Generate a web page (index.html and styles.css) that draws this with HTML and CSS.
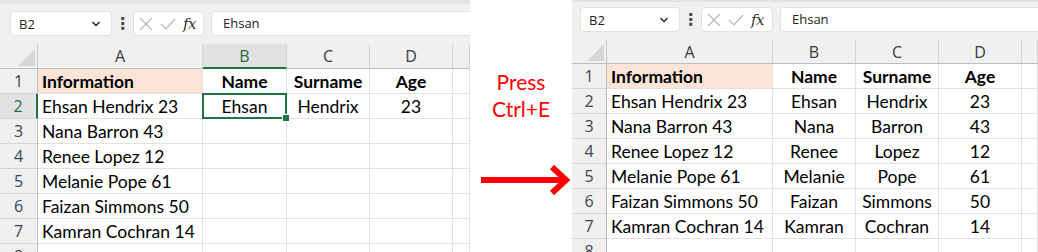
FILE: index.html
```html
<!DOCTYPE html>
<html>
<head>
<meta charset="utf-8">
<link rel="stylesheet" href="styles.css">
</head>
<body>
<div class="page">
  <div class="xl xl-left">
    <div class="toolbar">
      <div class="namebox"><span>B2</span><svg class="chev" width="10" height="8" viewBox="0 0 10 8"><path d="M1.5 2 L5 5.5 L8.5 2" fill="none" stroke="#333" stroke-width="1.6"/></svg></div>
      <div class="dots">⋮</div>
      <div class="fxbox">
        <svg width="14" height="14" viewBox="0 0 14 14"><path d="M1 1 L13 13 M13 1 L1 13" stroke="#b8b8b8" stroke-width="1.2" fill="none"/></svg>
        <svg width="16" height="14" viewBox="0 0 16 14"><path d="M1 7 L6 12 L15 2" stroke="#b8b8b8" stroke-width="1.2" fill="none"/></svg>
        <span class="fx">fx</span>
      </div>
      <div class="formula">Ehsan</div>
    </div>
    <div class="sheet sheet-left">
      <div class="corner"><span class="tri"></span></div>
      <div class="ch">A</div><div class="ch sel">B</div><div class="ch">C</div><div class="ch">D</div><div class="ch"></div>

      <div class="rh">1</div><div class="c l b fill">Information</div><div class="c b">Name</div><div class="c b">Surname</div><div class="c b">Age</div><div class="c"></div>
      <div class="rh sel">2</div><div class="c l">Ehsan Hendrix 23</div><div class="c active">Ehsan</div><div class="c">Hendrix</div><div class="c">23</div><div class="c"></div>
      <div class="rh">3</div><div class="c l">Nana Barron 43</div><div class="c"></div><div class="c"></div><div class="c"></div><div class="c"></div>
      <div class="rh">4</div><div class="c l">Renee Lopez 12</div><div class="c"></div><div class="c"></div><div class="c"></div><div class="c"></div>
      <div class="rh">5</div><div class="c l">Melanie Pope 61</div><div class="c"></div><div class="c"></div><div class="c"></div><div class="c"></div>
      <div class="rh">6</div><div class="c l">Faizan Simmons 50</div><div class="c"></div><div class="c"></div><div class="c"></div><div class="c"></div>
      <div class="rh">7</div><div class="c l">Kamran Cochran 14</div><div class="c"></div><div class="c"></div><div class="c"></div><div class="c"></div>
      <div class="rh">8</div><div class="c l"></div><div class="c"></div><div class="c"></div><div class="c"></div><div class="c"></div>
    </div>
  </div>

  <div class="mid">
    <div class="press">Press<br>Ctrl+E</div>
    <svg class="arrow" width="102" height="30" viewBox="0 0 102 30"><path d="M11 15 H94" stroke="#ff0000" stroke-width="6" fill="none"/><path d="M82 2 L96 15 L82 28" stroke="#ff0000" stroke-width="6" fill="none"/></svg>
  </div>

  <div class="xl xl-right">
    <div class="toolbar">
      <div class="namebox"><span>B2</span><svg class="chev" width="10" height="8" viewBox="0 0 10 8"><path d="M1.5 2 L5 5.5 L8.5 2" fill="none" stroke="#333" stroke-width="1.6"/></svg></div>
      <div class="dots">⋮</div>
      <div class="fxbox">
        <svg width="14" height="14" viewBox="0 0 14 14"><path d="M1 1 L13 13 M13 1 L1 13" stroke="#b8b8b8" stroke-width="1.2" fill="none"/></svg>
        <svg width="16" height="14" viewBox="0 0 16 14"><path d="M1 7 L6 12 L15 2" stroke="#b8b8b8" stroke-width="1.2" fill="none"/></svg>
        <span class="fx">fx</span>
      </div>
      <div class="formula">Ehsan</div>
    </div>
    <div class="sheet sheet-right">
      <div class="corner"><span class="tri"></span></div>
      <div class="ch">A</div><div class="ch">B</div><div class="ch">C</div><div class="ch">D</div><div class="ch"></div>

      <div class="rh">1</div><div class="c l b fill">Information</div><div class="c b">Name</div><div class="c b">Surname</div><div class="c b">Age</div><div class="c"></div>
      <div class="rh">2</div><div class="c l">Ehsan Hendrix 23</div><div class="c">Ehsan</div><div class="c">Hendrix</div><div class="c">23</div><div class="c"></div>
      <div class="rh">3</div><div class="c l">Nana Barron 43</div><div class="c">Nana</div><div class="c">Barron</div><div class="c">43</div><div class="c"></div>
      <div class="rh">4</div><div class="c l">Renee Lopez 12</div><div class="c">Renee</div><div class="c">Lopez</div><div class="c">12</div><div class="c"></div>
      <div class="rh">5</div><div class="c l">Melanie Pope 61</div><div class="c">Melanie</div><div class="c">Pope</div><div class="c">61</div><div class="c"></div>
      <div class="rh">6</div><div class="c l">Faizan Simmons 50</div><div class="c">Faizan</div><div class="c">Simmons</div><div class="c">50</div><div class="c"></div>
      <div class="rh">7</div><div class="c l">Kamran Cochran 14</div><div class="c">Kamran</div><div class="c">Cochran</div><div class="c">14</div><div class="c"></div>
      <div class="rh">8</div><div class="c l"></div><div class="c"></div><div class="c"></div><div class="c"></div><div class="c"></div>
    </div>
  </div>
</div>
</body>
</html>
```

FILE: styles.css
```css
html, body {
  margin: 0;
  padding: 0;
  background: #ffffff;
}

body {
  font-family: Lato, "Liberation Sans", sans-serif;
  color: #000;
}

.page {
  display: flex;
  width: 1038px;
  height: 252px;
  overflow: hidden;
}

.xl {
  display: flex;
  flex-direction: column;
  overflow: hidden;
  height: 252px;
}

.xl-left { width: 470px; }
.xl-right { width: 466px; }

.mid {
  width: 102px;
  display: flex;
  flex-direction: column;
  align-items: center;
}

/* toolbar */
.toolbar {
  display: flex;
  align-items: flex-start;
  background: #f0f0f0;
  flex: none;
}

.xl-left .toolbar {
  height: 44px;
  box-sizing: border-box;
  border-top: 4px solid #e3e3e3;
  padding: 7px 0 0 10px;
}

.xl-right .toolbar {
  height: 40px;
  box-sizing: border-box;
  border-top: 2px solid #e3e3e3;
  padding: 5px 0 0 8px;
}

.namebox {
  box-sizing: border-box;
  height: 25px;
  width: 102px;
  background: #fff;
  border: 1px solid #e1e1e1;
  border-radius: 4px;
  display: flex;
  align-items: center;
  justify-content: space-between;
  padding: 0 10px 0 8px;
  font-family: "Open Sans", sans-serif;
  font-size: 13px;
  color: #222;
}

.xl-right .namebox { width: 100px; }

.dots {
  width: 21px;
  text-align: center;
  font-family: "DejaVu Sans", sans-serif;
  font-size: 16px;
  line-height: 25px;
  color: #444;
  font-weight: bold;
}

.fxbox {
  box-sizing: border-box;
  height: 25px;
  width: 71px;
  background: #fff;
  border: 1px solid #e1e1e1;
  border-radius: 4px;
  display: flex;
  align-items: center;
  gap: 7px;
  padding: 0 0 0 5px;
}

.xl-right .fxbox { width: 72px; }

.fx {
  font-family: "DejaVu Serif", "Liberation Serif", serif;
  font-style: italic;
  font-size: 15px;
  color: #333;
  letter-spacing: -0.5px;
}

.formula {
  box-sizing: border-box;
  margin-left: 7px;
  flex: 1;
  height: 25px;
  background: #fff;
  border: 1px solid #e1e1e1;
  border-right: none;
  border-radius: 4px 0 0 4px;
  padding-left: 11px;
  font-family: "Open Sans", sans-serif;
  font-size: 13px;
  line-height: 23px;
  color: #222;
}

/* sheet */
.sheet {
  display: grid;
  flex: none;
}

.sheet-left {
  grid-template-columns: 38px 165px 84px 83px 83px 17px;
  grid-template-rows: 25px repeat(8, 25px);
}

.sheet-right {
  grid-template-columns: 35px 166px 83px 83px 83px 16px;
  grid-template-rows: 24px repeat(8, 25px);
}

.corner {
  background: #f0f0f0;
  border-right: 1px solid #c8c8c8;
  border-bottom: 1px solid #bdbdbd;
  box-sizing: border-box;
  display: flex;
  align-items: flex-end;
  justify-content: flex-end;
  padding: 0 2px 2px 0;
}

.tri {
  width: 0;
  height: 0;
  border-left: 17px solid transparent;
  border-bottom: 17px solid #d6d6d6;
}

.ch {
  box-sizing: border-box;
  background: #f0f0f0;
  border-right: 1px solid #d4d4d4;
  border-bottom: 1px solid #bdbdbd;
  font-family: "Open Sans", sans-serif;
  font-size: 16px;
  line-height: 24px;
  text-align: center;
  color: #3a3a3a;
}

.ch.sel {
  background: #e2e2e2;
  color: #1e6b41;
  border-bottom: 2px solid #217346;
}

.rh {
  box-sizing: border-box;
  background: #f0f0f0;
  border-right: 1px solid #bdbdbd;
  border-bottom: 1px solid #d4d4d4;
  font-family: "Open Sans", sans-serif;
  font-size: 16px;
  line-height: 25px;
  text-align: center;
  color: #3b4452;
}

.rh.sel {
  color: #1e6b41;
  background: #e2e2e2;
  border-right: 2px solid #217346;
}

.c {
  box-sizing: border-box;
  border-right: 1px solid #e1e1e1;
  border-bottom: 1px solid #e1e1e1;
  font-size: 17.5px;
  line-height: 25px;
  text-align: center;
  white-space: nowrap;
  overflow: visible;
}

.c.l {
  text-align: left;
  padding-left: 4px;
}

.c.b { font-weight: bold; }

.c.fill { background: #fce4d6; }

.c.active {
  position: relative;
}

.c.active::after {
  content: "";
  position: absolute;
  left: -1px;
  top: -1px;
  right: -1px;
  bottom: -1px;
  border: 2px solid #217346;
}

.c.active::before {
  content: "";
  position: absolute;
  right: -4px;
  bottom: -4px;
  width: 6px;
  height: 6px;
  background: #217346;
  border: 1px solid #fff;
  z-index: 2;
}

/* middle annotation */
.press {
  margin-top: 68px;
  color: #ff0000;
  font-size: 21px;
  line-height: 27px;
  text-align: center;
}

.arrow {
  margin-top: 43px;
  display: block;
}
```
